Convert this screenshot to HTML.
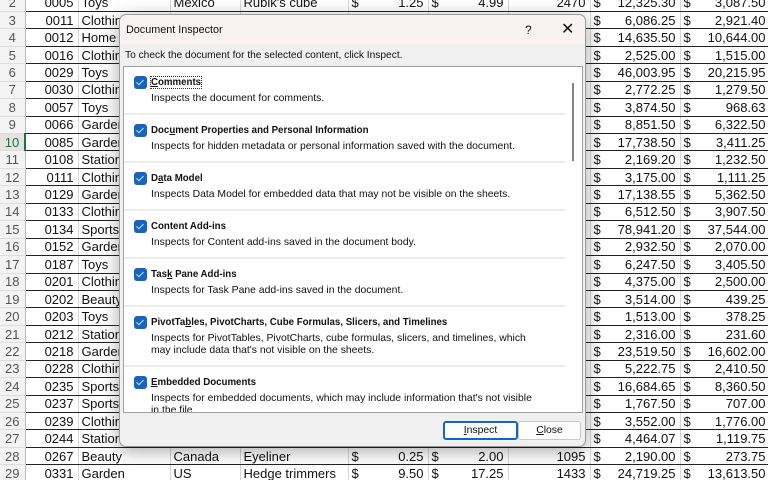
<!DOCTYPE html>
<html><head><meta charset="utf-8"><style>
*{box-sizing:border-box;margin:0;padding:0}
html,body{width:768px;height:480px;overflow:hidden}
body{background:#fff;font-family:"Liberation Sans",sans-serif;position:relative}
table{position:absolute;left:0;top:-6px;border-collapse:collapse;table-layout:fixed;width:770px;font-size:13px;color:#111}
td{height:17.45px;max-height:17.45px;border-right:1px solid #d6d6d6;border-bottom:1px solid #222;white-space:nowrap;overflow:hidden;padding:0 4px 0 3px;line-height:15px}
td.h{background:#f3f3f3;color:#555;text-align:center;border-right:1px solid #bbb;border-bottom:1px solid #ddd;padding:0}
td.sel{background:#e3e3e3;color:#1a7340;border-right:2px solid #1a7340}
.r{text-align:right}
.d{display:flex;justify-content:space-between;height:15px}
#dlg{position:absolute;left:119px;top:14px;width:467px;height:433px;background:#f0f0f0;border:1px solid #9a9a9a;border-radius:7px;box-shadow:0 4px 18px rgba(0,0,0,.35);font-size:10.2px;color:#111}
#tb{height:29px;background:#f8f2f2;border-radius:7px 7px 0 0;position:relative}
#tb .t{position:absolute;left:6px;top:9px;font-size:10.8px}
#tb .q{position:absolute;left:405px;top:8px;font-size:12px}
#tb .x{position:absolute;left:441px;top:4px;font-size:16px;font-weight:300}
.ins{position:absolute;left:5px;top:35px}
#lb{position:absolute;left:3px;top:51px;width:460px;height:347px;background:#fff;border:1px solid #a0a0a0;overflow:hidden}
.it{position:absolute;left:0;width:441px;height:48px;border-bottom:2px solid #ececec}
.cb{position:absolute;left:10px;top:9px;width:13px;height:13px;background:#1565c0;border-radius:3px}
.cb:after{content:"";position:absolute;left:4px;top:2px;width:3px;height:6px;border:solid #cfe0f5;border-width:0 1px 1px 0;transform:rotate(45deg)}
.ti{position:absolute;left:27px;top:10px;font-weight:bold;font-size:9.7px}
.de{position:absolute;left:27px;top:26px;width:390px;line-height:12px;font-size:10.4px}
#sb{position:absolute;left:448px;top:16px;width:2px;height:78px;background:#858585}
.bt{position:absolute;top:406px;height:19px;background:#fdfdfd;border:1px solid #c8c8c8;border-radius:3px;text-align:center;line-height:17px;font-size:10.4px}
</style></head><body>
<table>
<colgroup><col style="width:25px"><col style="width:53px"><col style="width:92px"><col style="width:70px"><col style="width:108px"><col style="width:80px"><col style="width:80px"><col style="width:82px"><col style="width:90px"><col style="width:90px"></colgroup>
<tr><td class="h">2</td><td class="r">0005</td><td>Toys</td><td>Mexico</td><td>Rubik's cube</td><td><div class="d"><span>$</span><span>1.25</span></div></td><td><div class="d"><span>$</span><span>4.99</span></div></td><td class="r">2470</td><td><div class="d"><span>$</span><span>12,325.30</span></div></td><td><div class="d"><span>$</span><span>3,087.50</span></div></td></tr>
<tr><td class="h">3</td><td class="r">0011</td><td>Clothing</td><td></td><td></td><td></td><td></td><td></td><td><div class="d"><span>$</span><span>6,086.25</span></div></td><td><div class="d"><span>$</span><span>2,921.40</span></div></td></tr>
<tr><td class="h">4</td><td class="r">0012</td><td>Home</td><td></td><td></td><td></td><td></td><td></td><td><div class="d"><span>$</span><span>14,635.50</span></div></td><td><div class="d"><span>$</span><span>10,644.00</span></div></td></tr>
<tr><td class="h">5</td><td class="r">0016</td><td>Clothing</td><td></td><td></td><td></td><td></td><td></td><td><div class="d"><span>$</span><span>2,525.00</span></div></td><td><div class="d"><span>$</span><span>1,515.00</span></div></td></tr>
<tr><td class="h">6</td><td class="r">0029</td><td>Toys</td><td></td><td></td><td></td><td></td><td></td><td><div class="d"><span>$</span><span>46,003.95</span></div></td><td><div class="d"><span>$</span><span>20,215.95</span></div></td></tr>
<tr><td class="h">7</td><td class="r">0030</td><td>Clothing</td><td></td><td></td><td></td><td></td><td></td><td><div class="d"><span>$</span><span>2,772.25</span></div></td><td><div class="d"><span>$</span><span>1,279.50</span></div></td></tr>
<tr><td class="h">8</td><td class="r">0057</td><td>Toys</td><td></td><td></td><td></td><td></td><td></td><td><div class="d"><span>$</span><span>3,874.50</span></div></td><td><div class="d"><span>$</span><span>968.63</span></div></td></tr>
<tr><td class="h">9</td><td class="r">0066</td><td>Garden</td><td></td><td></td><td></td><td></td><td></td><td><div class="d"><span>$</span><span>8,851.50</span></div></td><td><div class="d"><span>$</span><span>6,322.50</span></div></td></tr>
<tr><td class="h sel">10</td><td class="r">0085</td><td>Garden</td><td></td><td></td><td></td><td></td><td></td><td><div class="d"><span>$</span><span>17,738.50</span></div></td><td><div class="d"><span>$</span><span>3,411.25</span></div></td></tr>
<tr><td class="h">11</td><td class="r">0108</td><td>Stationery</td><td></td><td></td><td></td><td></td><td></td><td><div class="d"><span>$</span><span>2,169.20</span></div></td><td><div class="d"><span>$</span><span>1,232.50</span></div></td></tr>
<tr><td class="h">12</td><td class="r">0111</td><td>Clothing</td><td></td><td></td><td></td><td></td><td></td><td><div class="d"><span>$</span><span>3,175.00</span></div></td><td><div class="d"><span>$</span><span>1,111.25</span></div></td></tr>
<tr><td class="h">13</td><td class="r">0129</td><td>Garden</td><td></td><td></td><td></td><td></td><td></td><td><div class="d"><span>$</span><span>17,138.55</span></div></td><td><div class="d"><span>$</span><span>5,362.50</span></div></td></tr>
<tr><td class="h">14</td><td class="r">0133</td><td>Clothing</td><td></td><td></td><td></td><td></td><td></td><td><div class="d"><span>$</span><span>6,512.50</span></div></td><td><div class="d"><span>$</span><span>3,907.50</span></div></td></tr>
<tr><td class="h">15</td><td class="r">0134</td><td>Sports</td><td></td><td></td><td></td><td></td><td></td><td><div class="d"><span>$</span><span>78,941.20</span></div></td><td><div class="d"><span>$</span><span>37,544.00</span></div></td></tr>
<tr><td class="h">16</td><td class="r">0152</td><td>Garden</td><td></td><td></td><td></td><td></td><td></td><td><div class="d"><span>$</span><span>2,932.50</span></div></td><td><div class="d"><span>$</span><span>2,070.00</span></div></td></tr>
<tr><td class="h">17</td><td class="r">0187</td><td>Toys</td><td></td><td></td><td></td><td></td><td></td><td><div class="d"><span>$</span><span>6,247.50</span></div></td><td><div class="d"><span>$</span><span>3,405.50</span></div></td></tr>
<tr><td class="h">18</td><td class="r">0201</td><td>Clothing</td><td></td><td></td><td></td><td></td><td></td><td><div class="d"><span>$</span><span>4,375.00</span></div></td><td><div class="d"><span>$</span><span>2,500.00</span></div></td></tr>
<tr><td class="h">19</td><td class="r">0202</td><td>Beauty</td><td></td><td></td><td></td><td></td><td></td><td><div class="d"><span>$</span><span>3,514.00</span></div></td><td><div class="d"><span>$</span><span>439.25</span></div></td></tr>
<tr><td class="h">20</td><td class="r">0203</td><td>Toys</td><td></td><td></td><td></td><td></td><td></td><td><div class="d"><span>$</span><span>1,513.00</span></div></td><td><div class="d"><span>$</span><span>378.25</span></div></td></tr>
<tr><td class="h">21</td><td class="r">0212</td><td>Stationery</td><td></td><td></td><td></td><td></td><td></td><td><div class="d"><span>$</span><span>2,316.00</span></div></td><td><div class="d"><span>$</span><span>231.60</span></div></td></tr>
<tr><td class="h">22</td><td class="r">0218</td><td>Garden</td><td></td><td></td><td></td><td></td><td></td><td><div class="d"><span>$</span><span>23,519.50</span></div></td><td><div class="d"><span>$</span><span>16,602.00</span></div></td></tr>
<tr><td class="h">23</td><td class="r">0228</td><td>Clothing</td><td></td><td></td><td></td><td></td><td></td><td><div class="d"><span>$</span><span>5,222.75</span></div></td><td><div class="d"><span>$</span><span>2,410.50</span></div></td></tr>
<tr><td class="h">24</td><td class="r">0235</td><td>Sports</td><td></td><td></td><td></td><td></td><td></td><td><div class="d"><span>$</span><span>16,684.65</span></div></td><td><div class="d"><span>$</span><span>8,360.50</span></div></td></tr>
<tr><td class="h">25</td><td class="r">0237</td><td>Sports</td><td></td><td></td><td></td><td></td><td></td><td><div class="d"><span>$</span><span>1,767.50</span></div></td><td><div class="d"><span>$</span><span>707.00</span></div></td></tr>
<tr><td class="h">26</td><td class="r">0239</td><td>Clothing</td><td></td><td></td><td></td><td></td><td></td><td><div class="d"><span>$</span><span>3,552.00</span></div></td><td><div class="d"><span>$</span><span>1,776.00</span></div></td></tr>
<tr><td class="h">27</td><td class="r">0244</td><td>Stationery</td><td></td><td></td><td></td><td></td><td></td><td><div class="d"><span>$</span><span>4,464.07</span></div></td><td><div class="d"><span>$</span><span>1,119.75</span></div></td></tr>
<tr><td class="h">28</td><td class="r">0267</td><td>Beauty</td><td>Canada</td><td>Eyeliner</td><td><div class="d"><span>$</span><span>0.25</span></div></td><td><div class="d"><span>$</span><span>2.00</span></div></td><td class="r">1095</td><td><div class="d"><span>$</span><span>2,190.00</span></div></td><td><div class="d"><span>$</span><span>273.75</span></div></td></tr>
<tr><td class="h">29</td><td class="r">0331</td><td>Garden</td><td>US</td><td>Hedge trimmers</td><td><div class="d"><span>$</span><span>9.50</span></div></td><td><div class="d"><span>$</span><span>17.25</span></div></td><td class="r">1433</td><td><div class="d"><span>$</span><span>24,719.25</span></div></td><td><div class="d"><span>$</span><span>13,613.50</span></div></td></tr>
</table>

<div id="dlg">
<div id="tb"><span class="t">Document Inspector</span><span class="q">?</span><span class="x">✕</span></div>
<div class="ins">To check the document for the selected content, click Inspect.</div>
<div id="lb">
<div class="it" style="top:0"><div class="cb"></div><div class="ti" style="outline:1px dotted #333"><u>C</u>omments</div><div class="de">Inspects the document for comments.</div></div>
<div class="it" style="top:48px"><div class="cb"></div><div class="ti">Doc<u>u</u>ment Properties and Personal Information</div><div class="de">Inspects for hidden metadata or personal information saved with the document.</div></div>
<div class="it" style="top:96px"><div class="cb"></div><div class="ti">D<u>a</u>ta Model</div><div class="de">Inspects Data Model for embedded data that may not be visible on the sheets.</div></div>
<div class="it" style="top:144px"><div class="cb"></div><div class="ti">Content Add-ins</div><div class="de">Inspects for Content add-ins saved in the document body.</div></div>
<div class="it" style="top:192px"><div class="cb"></div><div class="ti">Tas<u>k</u> Pane Add-ins</div><div class="de">Inspects for Task Pane add-ins saved in the document.</div></div>
<div class="it" style="top:240px;height:60px"><div class="cb"></div><div class="ti">PivotTa<u>b</u>les, PivotCharts, Cube Formulas, Slicers, and Timelines</div><div class="de">Inspects for PivotTables, PivotCharts, cube formulas, slicers, and timelines, which may include data that's not visible on the sheets.</div></div>
<div class="it" style="top:300px;border:0"><div class="cb"></div><div class="ti"><u>E</u>mbedded Documents</div><div class="de">Inspects for embedded documents, which may include information that's not visible in the file.</div></div>
<div id="sb"></div>
</div>
<div class="bt" style="left:323px;width:75px;border:2px solid #1565c0;line-height:15px"><u>I</u>nspect</div>
<div class="bt" style="left:398px;width:63px"><u>C</u>lose</div>
</div>
</body></html>
